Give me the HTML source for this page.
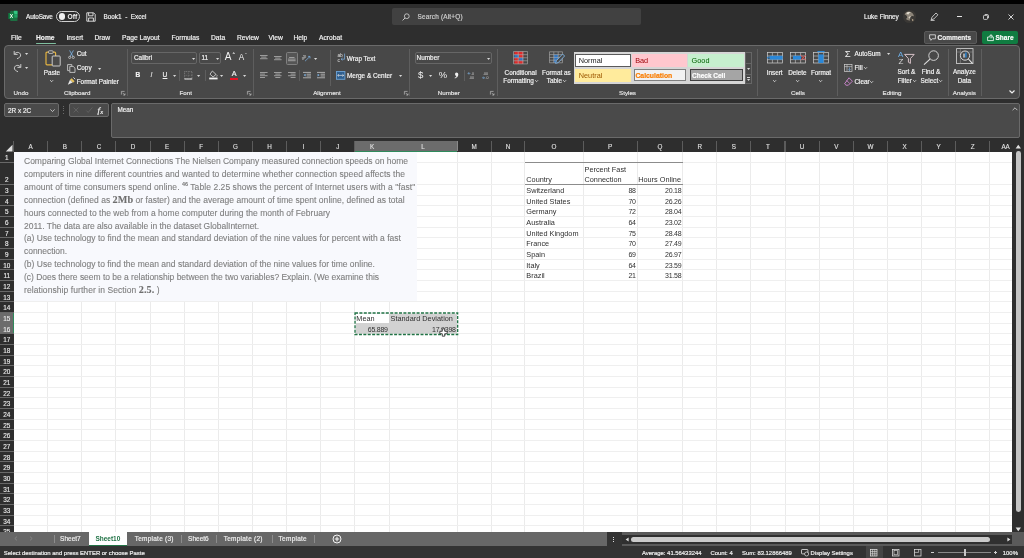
<!DOCTYPE html>
<html lang="en"><head><meta charset="utf-8"><title>Book1 - Excel</title><style>
html,body{margin:0;padding:0}
body{width:1024px;height:558px;overflow:hidden;position:relative;background:#2e2e2e;font-family:"Liberation Sans",sans-serif;-webkit-font-smoothing:antialiased}
#app{position:absolute;left:0;top:0;width:1024px;height:558px;will-change:transform;overflow:hidden}
.a{position:absolute;box-sizing:border-box}
.t{white-space:nowrap}
.w{-webkit-text-stroke:0.18px currentColor}
.p{font-size:8.5px;line-height:12px;color:#7e7e7e;-webkit-text-stroke:0.1px #7e7e7e}
.p sup{font-size:5.4px;line-height:0;font-weight:bold;vertical-align:4.2px;letter-spacing:0}
.m{font-family:"Liberation Serif",serif;font-size:10.2px;color:#6e6e6e;font-weight:bold}
.c{letter-spacing:0.02px}
.n{letter-spacing:-0.24px}
svg{overflow:visible}
</style></head><body><div id="app">
<div class="a" style="left:13.60px;top:152.00px;width:998.80px;height:379.60px;background:#fff;"></div><div class="a" style="left:47.23px;top:152.00px;width:0.90px;height:379.60px;background:#ebebeb;"></div><div class="a" style="left:81.36px;top:152.00px;width:0.90px;height:379.60px;background:#ebebeb;"></div><div class="a" style="left:115.49px;top:152.00px;width:0.90px;height:379.60px;background:#ebebeb;"></div><div class="a" style="left:149.62px;top:152.00px;width:0.90px;height:379.60px;background:#ebebeb;"></div><div class="a" style="left:183.75px;top:152.00px;width:0.90px;height:379.60px;background:#ebebeb;"></div><div class="a" style="left:217.88px;top:152.00px;width:0.90px;height:379.60px;background:#ebebeb;"></div><div class="a" style="left:252.01px;top:152.00px;width:0.90px;height:379.60px;background:#ebebeb;"></div><div class="a" style="left:286.14px;top:152.00px;width:0.90px;height:379.60px;background:#ebebeb;"></div><div class="a" style="left:320.27px;top:152.00px;width:0.90px;height:379.60px;background:#ebebeb;"></div><div class="a" style="left:354.40px;top:152.00px;width:0.90px;height:379.60px;background:#ebebeb;"></div><div class="a" style="left:388.60px;top:152.00px;width:0.90px;height:379.60px;background:#ebebeb;"></div><div class="a" style="left:456.60px;top:152.00px;width:0.90px;height:379.60px;background:#ebebeb;"></div><div class="a" style="left:490.80px;top:152.00px;width:0.90px;height:379.60px;background:#ebebeb;"></div><div class="a" style="left:524.40px;top:152.00px;width:0.90px;height:379.60px;background:#ebebeb;"></div><div class="a" style="left:582.60px;top:152.00px;width:0.90px;height:379.60px;background:#ebebeb;"></div><div class="a" style="left:636.60px;top:152.00px;width:0.90px;height:379.60px;background:#ebebeb;"></div><div class="a" style="left:682.20px;top:152.00px;width:0.90px;height:379.60px;background:#ebebeb;"></div><div class="a" style="left:716.33px;top:152.00px;width:0.90px;height:379.60px;background:#ebebeb;"></div><div class="a" style="left:750.46px;top:152.00px;width:0.90px;height:379.60px;background:#ebebeb;"></div><div class="a" style="left:784.59px;top:152.00px;width:0.90px;height:379.60px;background:#ebebeb;"></div><div class="a" style="left:818.72px;top:152.00px;width:0.90px;height:379.60px;background:#ebebeb;"></div><div class="a" style="left:852.85px;top:152.00px;width:0.90px;height:379.60px;background:#ebebeb;"></div><div class="a" style="left:886.98px;top:152.00px;width:0.90px;height:379.60px;background:#ebebeb;"></div><div class="a" style="left:921.11px;top:152.00px;width:0.90px;height:379.60px;background:#ebebeb;"></div><div class="a" style="left:955.24px;top:152.00px;width:0.90px;height:379.60px;background:#ebebeb;"></div><div class="a" style="left:989.37px;top:152.00px;width:0.90px;height:379.60px;background:#ebebeb;"></div><div class="a" style="left:13.60px;top:162.17px;width:998.80px;height:0.90px;background:#efefef;"></div><div class="a" style="left:13.60px;top:184.04px;width:998.80px;height:0.90px;background:#efefef;"></div><div class="a" style="left:13.60px;top:194.70px;width:998.80px;height:0.90px;background:#efefef;"></div><div class="a" style="left:13.60px;top:205.37px;width:998.80px;height:0.90px;background:#efefef;"></div><div class="a" style="left:13.60px;top:216.04px;width:998.80px;height:0.90px;background:#efefef;"></div><div class="a" style="left:13.60px;top:226.70px;width:998.80px;height:0.90px;background:#efefef;"></div><div class="a" style="left:13.60px;top:237.37px;width:998.80px;height:0.90px;background:#efefef;"></div><div class="a" style="left:13.60px;top:248.04px;width:998.80px;height:0.90px;background:#efefef;"></div><div class="a" style="left:13.60px;top:258.70px;width:998.80px;height:0.90px;background:#efefef;"></div><div class="a" style="left:13.60px;top:269.37px;width:998.80px;height:0.90px;background:#efefef;"></div><div class="a" style="left:13.60px;top:280.04px;width:998.80px;height:0.90px;background:#efefef;"></div><div class="a" style="left:13.60px;top:290.70px;width:998.80px;height:0.90px;background:#efefef;"></div><div class="a" style="left:13.60px;top:301.37px;width:998.80px;height:0.90px;background:#efefef;"></div><div class="a" style="left:13.60px;top:312.04px;width:998.80px;height:0.90px;background:#efefef;"></div><div class="a" style="left:13.60px;top:322.70px;width:998.80px;height:0.90px;background:#efefef;"></div><div class="a" style="left:13.60px;top:333.37px;width:998.80px;height:0.90px;background:#efefef;"></div><div class="a" style="left:13.60px;top:344.04px;width:998.80px;height:0.90px;background:#efefef;"></div><div class="a" style="left:13.60px;top:354.70px;width:998.80px;height:0.90px;background:#efefef;"></div><div class="a" style="left:13.60px;top:365.37px;width:998.80px;height:0.90px;background:#efefef;"></div><div class="a" style="left:13.60px;top:376.04px;width:998.80px;height:0.90px;background:#efefef;"></div><div class="a" style="left:13.60px;top:386.70px;width:998.80px;height:0.90px;background:#efefef;"></div><div class="a" style="left:13.60px;top:397.37px;width:998.80px;height:0.90px;background:#efefef;"></div><div class="a" style="left:13.60px;top:408.04px;width:998.80px;height:0.90px;background:#efefef;"></div><div class="a" style="left:13.60px;top:418.70px;width:998.80px;height:0.90px;background:#efefef;"></div><div class="a" style="left:13.60px;top:429.37px;width:998.80px;height:0.90px;background:#efefef;"></div><div class="a" style="left:13.60px;top:440.04px;width:998.80px;height:0.90px;background:#efefef;"></div><div class="a" style="left:13.60px;top:450.70px;width:998.80px;height:0.90px;background:#efefef;"></div><div class="a" style="left:13.60px;top:461.37px;width:998.80px;height:0.90px;background:#efefef;"></div><div class="a" style="left:13.60px;top:472.04px;width:998.80px;height:0.90px;background:#efefef;"></div><div class="a" style="left:13.60px;top:482.70px;width:998.80px;height:0.90px;background:#efefef;"></div><div class="a" style="left:13.60px;top:493.37px;width:998.80px;height:0.90px;background:#efefef;"></div><div class="a" style="left:13.60px;top:504.04px;width:998.80px;height:0.90px;background:#efefef;"></div><div class="a" style="left:13.60px;top:514.70px;width:998.80px;height:0.90px;background:#efefef;"></div><div class="a" style="left:13.60px;top:525.37px;width:998.80px;height:0.90px;background:#efefef;"></div><div class="a t " style="left:30.67px;top:141.80px;line-height:10px;font-size:6.3px;color:#e4e4e4;transform:translateX(-50%);-webkit-text-stroke:0.1px currentColor;">A</div><div class="a" style="left:47.13px;top:139.80px;width:1.10px;height:12.20px;background:#5c5c5c;"></div><div class="a t " style="left:64.80px;top:141.80px;line-height:10px;font-size:6.3px;color:#e4e4e4;transform:translateX(-50%);-webkit-text-stroke:0.1px currentColor;">B</div><div class="a" style="left:81.26px;top:139.80px;width:1.10px;height:12.20px;background:#5c5c5c;"></div><div class="a t " style="left:98.93px;top:141.80px;line-height:10px;font-size:6.3px;color:#e4e4e4;transform:translateX(-50%);-webkit-text-stroke:0.1px currentColor;">C</div><div class="a" style="left:115.39px;top:139.80px;width:1.10px;height:12.20px;background:#5c5c5c;"></div><div class="a t " style="left:133.06px;top:141.80px;line-height:10px;font-size:6.3px;color:#e4e4e4;transform:translateX(-50%);-webkit-text-stroke:0.1px currentColor;">D</div><div class="a" style="left:149.52px;top:139.80px;width:1.10px;height:12.20px;background:#5c5c5c;"></div><div class="a t " style="left:167.19px;top:141.80px;line-height:10px;font-size:6.3px;color:#e4e4e4;transform:translateX(-50%);-webkit-text-stroke:0.1px currentColor;">E</div><div class="a" style="left:183.65px;top:139.80px;width:1.10px;height:12.20px;background:#5c5c5c;"></div><div class="a t " style="left:201.31px;top:141.80px;line-height:10px;font-size:6.3px;color:#e4e4e4;transform:translateX(-50%);-webkit-text-stroke:0.1px currentColor;">F</div><div class="a" style="left:217.78px;top:139.80px;width:1.10px;height:12.20px;background:#5c5c5c;"></div><div class="a t " style="left:235.44px;top:141.80px;line-height:10px;font-size:6.3px;color:#e4e4e4;transform:translateX(-50%);-webkit-text-stroke:0.1px currentColor;">G</div><div class="a" style="left:251.91px;top:139.80px;width:1.10px;height:12.20px;background:#5c5c5c;"></div><div class="a t " style="left:269.57px;top:141.80px;line-height:10px;font-size:6.3px;color:#e4e4e4;transform:translateX(-50%);-webkit-text-stroke:0.1px currentColor;">H</div><div class="a" style="left:286.04px;top:139.80px;width:1.10px;height:12.20px;background:#5c5c5c;"></div><div class="a t " style="left:303.70px;top:141.80px;line-height:10px;font-size:6.3px;color:#e4e4e4;transform:translateX(-50%);-webkit-text-stroke:0.1px currentColor;">I</div><div class="a" style="left:320.17px;top:139.80px;width:1.10px;height:12.20px;background:#5c5c5c;"></div><div class="a t " style="left:337.83px;top:141.80px;line-height:10px;font-size:6.3px;color:#e4e4e4;transform:translateX(-50%);-webkit-text-stroke:0.1px currentColor;">J</div><div class="a" style="left:354.30px;top:139.80px;width:1.10px;height:12.20px;background:#5c5c5c;"></div><div class="a" style="left:354.90px;top:141.20px;width:34.20px;height:10.80px;background:#6c6c6c;border-bottom:1px solid #2f8a5c;box-sizing:border-box;"></div><div class="a t " style="left:372.00px;top:141.80px;line-height:10px;font-size:6.3px;color:#e4e4e4;transform:translateX(-50%);-webkit-text-stroke:0.1px currentColor;">K</div><div class="a" style="left:388.50px;top:141.20px;width:1.10px;height:9.80px;background:#8a8a8a;"></div><div class="a" style="left:389.10px;top:141.20px;width:68.00px;height:10.80px;background:#6c6c6c;border-bottom:1px solid #2f8a5c;box-sizing:border-box;"></div><div class="a t " style="left:423.10px;top:141.80px;line-height:10px;font-size:6.3px;color:#e4e4e4;transform:translateX(-50%);-webkit-text-stroke:0.1px currentColor;">L</div><div class="a" style="left:456.50px;top:141.20px;width:1.10px;height:9.80px;background:#8a8a8a;"></div><div class="a t " style="left:474.20px;top:141.80px;line-height:10px;font-size:6.3px;color:#e4e4e4;transform:translateX(-50%);-webkit-text-stroke:0.1px currentColor;">M</div><div class="a" style="left:490.70px;top:139.80px;width:1.10px;height:12.20px;background:#5c5c5c;"></div><div class="a t " style="left:508.10px;top:141.80px;line-height:10px;font-size:6.3px;color:#e4e4e4;transform:translateX(-50%);-webkit-text-stroke:0.1px currentColor;">N</div><div class="a" style="left:524.30px;top:139.80px;width:1.10px;height:12.20px;background:#5c5c5c;"></div><div class="a t " style="left:554.00px;top:141.80px;line-height:10px;font-size:6.3px;color:#e4e4e4;transform:translateX(-50%);-webkit-text-stroke:0.1px currentColor;">O</div><div class="a" style="left:582.50px;top:139.80px;width:1.10px;height:12.20px;background:#5c5c5c;"></div><div class="a t " style="left:610.10px;top:141.80px;line-height:10px;font-size:6.3px;color:#e4e4e4;transform:translateX(-50%);-webkit-text-stroke:0.1px currentColor;">P</div><div class="a" style="left:636.50px;top:139.80px;width:1.10px;height:12.20px;background:#5c5c5c;"></div><div class="a t " style="left:659.90px;top:141.80px;line-height:10px;font-size:6.3px;color:#e4e4e4;transform:translateX(-50%);-webkit-text-stroke:0.1px currentColor;">Q</div><div class="a" style="left:682.10px;top:139.80px;width:1.10px;height:12.20px;background:#5c5c5c;"></div><div class="a t " style="left:699.77px;top:141.80px;line-height:10px;font-size:6.3px;color:#e4e4e4;transform:translateX(-50%);-webkit-text-stroke:0.1px currentColor;">R</div><div class="a" style="left:716.23px;top:139.80px;width:1.10px;height:12.20px;background:#5c5c5c;"></div><div class="a t " style="left:733.89px;top:141.80px;line-height:10px;font-size:6.3px;color:#e4e4e4;transform:translateX(-50%);-webkit-text-stroke:0.1px currentColor;">S</div><div class="a" style="left:750.36px;top:139.80px;width:1.10px;height:12.20px;background:#5c5c5c;"></div><div class="a t " style="left:768.03px;top:141.80px;line-height:10px;font-size:6.3px;color:#e4e4e4;transform:translateX(-50%);-webkit-text-stroke:0.1px currentColor;">T</div><div class="a" style="left:784.49px;top:139.80px;width:1.10px;height:12.20px;background:#5c5c5c;"></div><div class="a t " style="left:802.15px;top:141.80px;line-height:10px;font-size:6.3px;color:#e4e4e4;transform:translateX(-50%);-webkit-text-stroke:0.1px currentColor;">U</div><div class="a" style="left:818.62px;top:139.80px;width:1.10px;height:12.20px;background:#5c5c5c;"></div><div class="a t " style="left:836.29px;top:141.80px;line-height:10px;font-size:6.3px;color:#e4e4e4;transform:translateX(-50%);-webkit-text-stroke:0.1px currentColor;">V</div><div class="a" style="left:852.75px;top:139.80px;width:1.10px;height:12.20px;background:#5c5c5c;"></div><div class="a t " style="left:870.41px;top:141.80px;line-height:10px;font-size:6.3px;color:#e4e4e4;transform:translateX(-50%);-webkit-text-stroke:0.1px currentColor;">W</div><div class="a" style="left:886.88px;top:139.80px;width:1.10px;height:12.20px;background:#5c5c5c;"></div><div class="a t " style="left:904.55px;top:141.80px;line-height:10px;font-size:6.3px;color:#e4e4e4;transform:translateX(-50%);-webkit-text-stroke:0.1px currentColor;">X</div><div class="a" style="left:921.01px;top:139.80px;width:1.10px;height:12.20px;background:#5c5c5c;"></div><div class="a t " style="left:938.67px;top:141.80px;line-height:10px;font-size:6.3px;color:#e4e4e4;transform:translateX(-50%);-webkit-text-stroke:0.1px currentColor;">Y</div><div class="a" style="left:955.14px;top:139.80px;width:1.10px;height:12.20px;background:#5c5c5c;"></div><div class="a t " style="left:972.81px;top:141.80px;line-height:10px;font-size:6.3px;color:#e4e4e4;transform:translateX(-50%);-webkit-text-stroke:0.1px currentColor;">Z</div><div class="a" style="left:989.27px;top:139.80px;width:1.10px;height:12.20px;background:#5c5c5c;"></div><div class="a t " style="left:1005.60px;top:141.80px;line-height:10px;font-size:6.3px;color:#e4e4e4;transform:translateX(-50%);-webkit-text-stroke:0.1px currentColor;">AA</div><div class="a" style="left:13.00px;top:139.80px;width:1.10px;height:12.20px;background:#5c5c5c;"></div><svg class="a" style="left:4.50px;top:143.50px;" width="8" height="8" viewBox="0 0 8 8"><path d="M7.5 0.8 L7.5 7.5 L0.8 7.5 Z" fill="#e0e0e0"/></svg><div class="a t w" style="left:0;width:13.6px;text-align:center;top:153.43px;line-height:10px;font-size:6.4px;color:#ececec;-webkit-text-stroke-width:0.12px;clip-path:inset(0 0 0.00px 0)">1</div><div class="a" style="left:0.00px;top:161.97px;width:13.60px;height:1.20px;background:#686868;"></div><div class="a t w" style="left:0;width:13.6px;text-align:center;top:175.44px;line-height:10px;font-size:6.4px;color:#ececec;-webkit-text-stroke-width:0.12px;clip-path:inset(0 0 0.00px 0)">2</div><div class="a" style="left:0.00px;top:183.84px;width:13.60px;height:1.20px;background:#686868;"></div><div class="a t w" style="left:0;width:13.6px;text-align:center;top:185.97px;line-height:10px;font-size:6.4px;color:#ececec;-webkit-text-stroke-width:0.12px;clip-path:inset(0 0 0.00px 0)">3</div><div class="a" style="left:0.00px;top:194.50px;width:13.60px;height:1.20px;background:#686868;"></div><div class="a t w" style="left:0;width:13.6px;text-align:center;top:196.64px;line-height:10px;font-size:6.4px;color:#ececec;-webkit-text-stroke-width:0.12px;clip-path:inset(0 0 0.00px 0)">4</div><div class="a" style="left:0.00px;top:205.17px;width:13.60px;height:1.20px;background:#686868;"></div><div class="a t w" style="left:0;width:13.6px;text-align:center;top:207.30px;line-height:10px;font-size:6.4px;color:#ececec;-webkit-text-stroke-width:0.12px;clip-path:inset(0 0 0.00px 0)">5</div><div class="a" style="left:0.00px;top:215.84px;width:13.60px;height:1.20px;background:#686868;"></div><div class="a t w" style="left:0;width:13.6px;text-align:center;top:217.97px;line-height:10px;font-size:6.4px;color:#ececec;-webkit-text-stroke-width:0.12px;clip-path:inset(0 0 0.00px 0)">6</div><div class="a" style="left:0.00px;top:226.50px;width:13.60px;height:1.20px;background:#686868;"></div><div class="a t w" style="left:0;width:13.6px;text-align:center;top:228.64px;line-height:10px;font-size:6.4px;color:#ececec;-webkit-text-stroke-width:0.12px;clip-path:inset(0 0 0.00px 0)">7</div><div class="a" style="left:0.00px;top:237.17px;width:13.60px;height:1.20px;background:#686868;"></div><div class="a t w" style="left:0;width:13.6px;text-align:center;top:239.30px;line-height:10px;font-size:6.4px;color:#ececec;-webkit-text-stroke-width:0.12px;clip-path:inset(0 0 0.00px 0)">8</div><div class="a" style="left:0.00px;top:247.84px;width:13.60px;height:1.20px;background:#686868;"></div><div class="a t w" style="left:0;width:13.6px;text-align:center;top:249.97px;line-height:10px;font-size:6.4px;color:#ececec;-webkit-text-stroke-width:0.12px;clip-path:inset(0 0 0.00px 0)">9</div><div class="a" style="left:0.00px;top:258.50px;width:13.60px;height:1.20px;background:#686868;"></div><div class="a t w" style="left:0;width:13.6px;text-align:center;top:260.64px;line-height:10px;font-size:6.4px;color:#ececec;-webkit-text-stroke-width:0.12px;clip-path:inset(0 0 0.00px 0)">10</div><div class="a" style="left:0.00px;top:269.17px;width:13.60px;height:1.20px;background:#686868;"></div><div class="a t w" style="left:0;width:13.6px;text-align:center;top:271.30px;line-height:10px;font-size:6.4px;color:#ececec;-webkit-text-stroke-width:0.12px;clip-path:inset(0 0 0.00px 0)">11</div><div class="a" style="left:0.00px;top:279.84px;width:13.60px;height:1.20px;background:#686868;"></div><div class="a t w" style="left:0;width:13.6px;text-align:center;top:281.97px;line-height:10px;font-size:6.4px;color:#ececec;-webkit-text-stroke-width:0.12px;clip-path:inset(0 0 0.00px 0)">12</div><div class="a" style="left:0.00px;top:290.50px;width:13.60px;height:1.20px;background:#686868;"></div><div class="a t w" style="left:0;width:13.6px;text-align:center;top:292.64px;line-height:10px;font-size:6.4px;color:#ececec;-webkit-text-stroke-width:0.12px;clip-path:inset(0 0 0.00px 0)">13</div><div class="a" style="left:0.00px;top:301.17px;width:13.60px;height:1.20px;background:#686868;"></div><div class="a t w" style="left:0;width:13.6px;text-align:center;top:303.30px;line-height:10px;font-size:6.4px;color:#ececec;-webkit-text-stroke-width:0.12px;clip-path:inset(0 0 0.00px 0)">14</div><div class="a" style="left:0.00px;top:311.84px;width:13.60px;height:1.20px;background:#686868;"></div><div class="a" style="left:0.00px;top:312.54px;width:13.90px;height:10.67px;background:#6c6c6c;border-right:1.4px solid #2f8a5c;box-sizing:border-box;"></div><div class="a t w" style="left:0;width:13.6px;text-align:center;top:313.97px;line-height:10px;font-size:6.4px;color:#ececec;-webkit-text-stroke-width:0.12px;clip-path:inset(0 0 0.00px 0)">15</div><div class="a" style="left:0.00px;top:322.50px;width:13.60px;height:1.20px;background:#8a8a8a;"></div><div class="a" style="left:0.00px;top:323.20px;width:13.90px;height:10.67px;background:#6c6c6c;border-right:1.4px solid #2f8a5c;box-sizing:border-box;"></div><div class="a t w" style="left:0;width:13.6px;text-align:center;top:324.64px;line-height:10px;font-size:6.4px;color:#ececec;-webkit-text-stroke-width:0.12px;clip-path:inset(0 0 0.00px 0)">16</div><div class="a" style="left:0.00px;top:333.17px;width:13.60px;height:1.20px;background:#686868;"></div><div class="a t w" style="left:0;width:13.6px;text-align:center;top:335.30px;line-height:10px;font-size:6.4px;color:#ececec;-webkit-text-stroke-width:0.12px;clip-path:inset(0 0 0.00px 0)">17</div><div class="a" style="left:0.00px;top:343.84px;width:13.60px;height:1.20px;background:#686868;"></div><div class="a t w" style="left:0;width:13.6px;text-align:center;top:345.97px;line-height:10px;font-size:6.4px;color:#ececec;-webkit-text-stroke-width:0.12px;clip-path:inset(0 0 0.00px 0)">18</div><div class="a" style="left:0.00px;top:354.50px;width:13.60px;height:1.20px;background:#686868;"></div><div class="a t w" style="left:0;width:13.6px;text-align:center;top:356.64px;line-height:10px;font-size:6.4px;color:#ececec;-webkit-text-stroke-width:0.12px;clip-path:inset(0 0 0.00px 0)">19</div><div class="a" style="left:0.00px;top:365.17px;width:13.60px;height:1.20px;background:#686868;"></div><div class="a t w" style="left:0;width:13.6px;text-align:center;top:367.30px;line-height:10px;font-size:6.4px;color:#ececec;-webkit-text-stroke-width:0.12px;clip-path:inset(0 0 0.00px 0)">20</div><div class="a" style="left:0.00px;top:375.84px;width:13.60px;height:1.20px;background:#686868;"></div><div class="a t w" style="left:0;width:13.6px;text-align:center;top:377.97px;line-height:10px;font-size:6.4px;color:#ececec;-webkit-text-stroke-width:0.12px;clip-path:inset(0 0 0.00px 0)">21</div><div class="a" style="left:0.00px;top:386.50px;width:13.60px;height:1.20px;background:#686868;"></div><div class="a t w" style="left:0;width:13.6px;text-align:center;top:388.64px;line-height:10px;font-size:6.4px;color:#ececec;-webkit-text-stroke-width:0.12px;clip-path:inset(0 0 0.00px 0)">22</div><div class="a" style="left:0.00px;top:397.17px;width:13.60px;height:1.20px;background:#686868;"></div><div class="a t w" style="left:0;width:13.6px;text-align:center;top:399.30px;line-height:10px;font-size:6.4px;color:#ececec;-webkit-text-stroke-width:0.12px;clip-path:inset(0 0 0.00px 0)">23</div><div class="a" style="left:0.00px;top:407.84px;width:13.60px;height:1.20px;background:#686868;"></div><div class="a t w" style="left:0;width:13.6px;text-align:center;top:409.97px;line-height:10px;font-size:6.4px;color:#ececec;-webkit-text-stroke-width:0.12px;clip-path:inset(0 0 0.00px 0)">24</div><div class="a" style="left:0.00px;top:418.50px;width:13.60px;height:1.20px;background:#686868;"></div><div class="a t w" style="left:0;width:13.6px;text-align:center;top:420.64px;line-height:10px;font-size:6.4px;color:#ececec;-webkit-text-stroke-width:0.12px;clip-path:inset(0 0 0.00px 0)">25</div><div class="a" style="left:0.00px;top:429.17px;width:13.60px;height:1.20px;background:#686868;"></div><div class="a t w" style="left:0;width:13.6px;text-align:center;top:431.30px;line-height:10px;font-size:6.4px;color:#ececec;-webkit-text-stroke-width:0.12px;clip-path:inset(0 0 0.00px 0)">26</div><div class="a" style="left:0.00px;top:439.84px;width:13.60px;height:1.20px;background:#686868;"></div><div class="a t w" style="left:0;width:13.6px;text-align:center;top:441.97px;line-height:10px;font-size:6.4px;color:#ececec;-webkit-text-stroke-width:0.12px;clip-path:inset(0 0 0.00px 0)">27</div><div class="a" style="left:0.00px;top:450.50px;width:13.60px;height:1.20px;background:#686868;"></div><div class="a t w" style="left:0;width:13.6px;text-align:center;top:452.64px;line-height:10px;font-size:6.4px;color:#ececec;-webkit-text-stroke-width:0.12px;clip-path:inset(0 0 0.00px 0)">28</div><div class="a" style="left:0.00px;top:461.17px;width:13.60px;height:1.20px;background:#686868;"></div><div class="a t w" style="left:0;width:13.6px;text-align:center;top:463.30px;line-height:10px;font-size:6.4px;color:#ececec;-webkit-text-stroke-width:0.12px;clip-path:inset(0 0 0.00px 0)">29</div><div class="a" style="left:0.00px;top:471.84px;width:13.60px;height:1.20px;background:#686868;"></div><div class="a t w" style="left:0;width:13.6px;text-align:center;top:473.97px;line-height:10px;font-size:6.4px;color:#ececec;-webkit-text-stroke-width:0.12px;clip-path:inset(0 0 0.00px 0)">30</div><div class="a" style="left:0.00px;top:482.50px;width:13.60px;height:1.20px;background:#686868;"></div><div class="a t w" style="left:0;width:13.6px;text-align:center;top:484.64px;line-height:10px;font-size:6.4px;color:#ececec;-webkit-text-stroke-width:0.12px;clip-path:inset(0 0 0.00px 0)">31</div><div class="a" style="left:0.00px;top:493.17px;width:13.60px;height:1.20px;background:#686868;"></div><div class="a t w" style="left:0;width:13.6px;text-align:center;top:495.30px;line-height:10px;font-size:6.4px;color:#ececec;-webkit-text-stroke-width:0.12px;clip-path:inset(0 0 0.00px 0)">32</div><div class="a" style="left:0.00px;top:503.84px;width:13.60px;height:1.20px;background:#686868;"></div><div class="a t w" style="left:0;width:13.6px;text-align:center;top:505.97px;line-height:10px;font-size:6.4px;color:#ececec;-webkit-text-stroke-width:0.12px;clip-path:inset(0 0 0.00px 0)">33</div><div class="a" style="left:0.00px;top:514.50px;width:13.60px;height:1.20px;background:#686868;"></div><div class="a t w" style="left:0;width:13.6px;text-align:center;top:516.64px;line-height:10px;font-size:6.4px;color:#ececec;-webkit-text-stroke-width:0.12px;clip-path:inset(0 0 0.00px 0)">34</div><div class="a" style="left:0.00px;top:525.17px;width:13.60px;height:1.20px;background:#686868;"></div><div class="a t w" style="left:0;width:13.6px;text-align:center;top:527.30px;line-height:10px;font-size:6.4px;color:#ececec;-webkit-text-stroke-width:0.12px;clip-path:inset(0 0 4.90px 0)">35</div><div class="a" style="left:13.60px;top:152.00px;width:403.60px;height:148.60px;background:#f8f9fd;"></div><div class="a t p" style="left:24px;top:155.20px;letter-spacing:-0.005px">Comparing Global Internet Connections The Nielsen Company measured connection speeds on home</div><div class="a t p" style="left:24px;top:168.07px;letter-spacing:0.053px">computers in nine different countries and wanted to determine whether connection speed affects the</div><div class="a t p" style="left:24px;top:180.94px;letter-spacing:0.066px">amount of time consumers spend online. <sup>46</sup> Table 2.25 shows the percent of Internet users with a "fast"</div><div class="a t p" style="left:24px;top:193.81px;letter-spacing:0.031px">connection (defined as <span class="m">2Mb</span> or faster) and the average amount of time spent online, defined as total</div><div class="a t p" style="left:24px;top:206.68px;letter-spacing:0.023px">hours connected to the web from a home computer during the month of February</div><div class="a t p" style="left:24px;top:219.55px;letter-spacing:-0.022px">2011. The data are also available in the dataset GlobalInternet.</div><div class="a t p" style="left:24px;top:232.42px;letter-spacing:0.013px">(a) Use technology to find the mean and standard deviation of the nine values for percent with a fast</div><div class="a t p" style="left:24px;top:245.29px;letter-spacing:-0.044px">connection.</div><div class="a t p" style="left:24px;top:258.16px;letter-spacing:0.009px">(b) Use technology to find the mean and standard deviation of the nine values for time online.</div><div class="a t p" style="left:24px;top:271.03px;letter-spacing:-0.022px">(c) Does there seem to be a relationship between the two variables? Explain. (We examine this</div><div class="a t p" style="left:24px;top:283.90px;letter-spacing:0.072px">relationship further in Section <span class="m">2.5.</span> )</div><div class="a" style="left:524.90px;top:161.87px;width:157.80px;height:1.10px;background:#8c8c8c;"></div><div class="a" style="left:524.90px;top:183.74px;width:157.80px;height:1.10px;background:#8c8c8c;"></div><div class="a t c" style="left:526.30px;top:175.44px;line-height:10px;font-size:7.3px;color:#303030;">Country</div><div class="a t c" style="left:584.50px;top:164.64px;line-height:10px;font-size:7.3px;color:#303030;">Percent Fast</div><div class="a t c" style="left:584.50px;top:175.44px;line-height:10px;font-size:7.3px;color:#303030;">Connection</div><div class="a t c" style="left:681.00px;top:175.44px;line-height:10px;font-size:7.3px;color:#303030;transform:translateX(-100%);">Hours Online</div><div class="a t c" style="left:526.30px;top:186.10px;line-height:10px;font-size:7.3px;color:#303030;">Switzerland</div><div class="a t n" style="left:635.74px;top:186.10px;line-height:10px;font-size:7.0px;color:#303030;transform:translateX(-100%);">88</div><div class="a t n" style="left:681.34px;top:186.10px;line-height:10px;font-size:7.0px;color:#303030;transform:translateX(-100%);">20.18</div><div class="a t c" style="left:526.30px;top:196.77px;line-height:10px;font-size:7.3px;color:#303030;">United States</div><div class="a t n" style="left:635.74px;top:196.77px;line-height:10px;font-size:7.0px;color:#303030;transform:translateX(-100%);">70</div><div class="a t n" style="left:681.34px;top:196.77px;line-height:10px;font-size:7.0px;color:#303030;transform:translateX(-100%);">26.26</div><div class="a t c" style="left:526.30px;top:207.44px;line-height:10px;font-size:7.3px;color:#303030;">Germany</div><div class="a t n" style="left:635.74px;top:207.44px;line-height:10px;font-size:7.0px;color:#303030;transform:translateX(-100%);">72</div><div class="a t n" style="left:681.34px;top:207.44px;line-height:10px;font-size:7.0px;color:#303030;transform:translateX(-100%);">28.04</div><div class="a t c" style="left:526.30px;top:218.10px;line-height:10px;font-size:7.3px;color:#303030;">Australia</div><div class="a t n" style="left:635.74px;top:218.10px;line-height:10px;font-size:7.0px;color:#303030;transform:translateX(-100%);">64</div><div class="a t n" style="left:681.34px;top:218.10px;line-height:10px;font-size:7.0px;color:#303030;transform:translateX(-100%);">23.02</div><div class="a t c" style="left:526.30px;top:228.77px;line-height:10px;font-size:7.3px;color:#303030;">United Kingdom</div><div class="a t n" style="left:635.74px;top:228.77px;line-height:10px;font-size:7.0px;color:#303030;transform:translateX(-100%);">75</div><div class="a t n" style="left:681.34px;top:228.77px;line-height:10px;font-size:7.0px;color:#303030;transform:translateX(-100%);">28.48</div><div class="a t c" style="left:526.30px;top:239.44px;line-height:10px;font-size:7.3px;color:#303030;">France</div><div class="a t n" style="left:635.74px;top:239.44px;line-height:10px;font-size:7.0px;color:#303030;transform:translateX(-100%);">70</div><div class="a t n" style="left:681.34px;top:239.44px;line-height:10px;font-size:7.0px;color:#303030;transform:translateX(-100%);">27.49</div><div class="a t c" style="left:526.30px;top:250.10px;line-height:10px;font-size:7.3px;color:#303030;">Spain</div><div class="a t n" style="left:635.74px;top:250.10px;line-height:10px;font-size:7.0px;color:#303030;transform:translateX(-100%);">69</div><div class="a t n" style="left:681.34px;top:250.10px;line-height:10px;font-size:7.0px;color:#303030;transform:translateX(-100%);">26.97</div><div class="a t c" style="left:526.30px;top:260.77px;line-height:10px;font-size:7.3px;color:#303030;">Italy</div><div class="a t n" style="left:635.74px;top:260.77px;line-height:10px;font-size:7.0px;color:#303030;transform:translateX(-100%);">64</div><div class="a t n" style="left:681.34px;top:260.77px;line-height:10px;font-size:7.0px;color:#303030;transform:translateX(-100%);">23.59</div><div class="a t c" style="left:526.30px;top:271.44px;line-height:10px;font-size:7.3px;color:#303030;">Brazil</div><div class="a t n" style="left:635.74px;top:271.44px;line-height:10px;font-size:7.0px;color:#303030;transform:translateX(-100%);">21</div><div class="a t n" style="left:681.34px;top:271.44px;line-height:10px;font-size:7.0px;color:#303030;transform:translateX(-100%);">31.58</div><div class="a" style="left:354.90px;top:312.54px;width:102.20px;height:21.33px;background:#d2d2d2;"></div><div class="a" style="left:355.90px;top:313.54px;width:33.00px;height:9.47px;background:#fff;"></div><div class="a t c" style="left:356.30px;top:314.10px;line-height:10px;font-size:7.3px;color:#303030;">Mean</div><div class="a t c" style="left:390.50px;top:314.10px;line-height:10px;font-size:7.3px;color:#303030;">Standard Deviation</div><div class="a t n" style="left:387.74px;top:324.77px;line-height:10px;font-size:7.0px;color:#303030;transform:translateX(-100%);">65.889</div><div class="a t n" style="left:455.74px;top:324.77px;line-height:10px;font-size:7.0px;color:#303030;transform:translateX(-100%);">17.9398</div><svg class="a" style="left:352.65px;top:310.84px;" width="106.7" height="25.53" viewBox="0 0 106.7 25.53"><rect x="2" y="2" width="102.70" height="21.53" fill="none" stroke="#fff" stroke-width="1.3"/><rect x="2" y="2" width="102.70" height="21.53" fill="none" stroke="#217346" stroke-width="1.3" stroke-dasharray="3 1.4"/></svg><svg class="a" style="left:438.60px;top:328.20px;" width="9" height="9" viewBox="0 0 11 11"><path d="M4 1h3v3h3v3h-3v3h-3v-3h-3v-3h3z" fill="#fff" stroke="#222" stroke-width="1"/></svg><div class="a" style="left:1012.40px;top:139.00px;width:11.60px;height:392.80px;background:#2e2e2e;"></div><div class="a" style="left:1016.20px;top:150.80px;width:4.80px;height:361.60px;background:#c4c4c4;border-radius:2.4px;"></div><svg class="a" style="left:1015.40px;top:143.60px;" width="7" height="5" viewBox="0 0 7 5"><path d="M0.6 4.4 L3.3 0.8 L6 4.4Z" fill="#e0e0e0"/></svg><svg class="a" style="left:1015.40px;top:526.60px;" width="7" height="5" viewBox="0 0 7 5"><path d="M0.6 0.6 L3.3 4.2 L6 0.6Z" fill="#e0e0e0"/></svg>
<div class="a" style="left:0.00px;top:0.00px;width:1024.00px;height:3.60px;background:#000;"></div><div class="a" style="left:0.00px;top:3.60px;width:1024.00px;height:96.40px;background:#2e2e2e;"></div><svg class="a" style="left:8.00px;top:9.50px;" width="10" height="12" viewBox="0 0 10 12"><rect x="2.2" y="0.8" width="7.3" height="10.2" rx="0.8" fill="#1d6f42"/><rect x="5.8" y="0.8" width="3.7" height="3.4" fill="#33c481"/><rect x="5.8" y="4.2" width="3.7" height="3.4" fill="#21a366"/><rect x="0.3" y="3" width="6" height="6" rx="0.6" fill="#107c41"/><text x="3.3" y="8" font-size="5" font-weight="bold" fill="#fff" text-anchor="middle" font-family="Liberation Sans, sans-serif">X</text></svg><div class="a t  w" style="left:26.00px;top:11.50px;line-height:10px;font-size:6.4px;color:#f2f2f2;letter-spacing:-0.12px;">AutoSave</div><div class="a" style="left:56.20px;top:11.20px;width:23.60px;height:10.60px;border:1px solid #d0d0d0;border-radius:6px;"></div><div class="a" style="left:58.60px;top:13.20px;width:6.60px;height:6.60px;background:#f0f0f0;border-radius:50%;"></div><div class="a t " style="left:67.60px;top:11.50px;line-height:10px;font-size:6.7px;color:#f2f2f2;font-weight:bold;-webkit-text-stroke:0;">Off</div><svg class="a" style="left:86.00px;top:12.00px;" width="10" height="10" viewBox="0 0 10 10"><path d="M0.8 0.8h6.8l1.6 1.6v6.8h-8.4z" fill="none" stroke="#e6e6e6" stroke-width="0.9"/><path d="M2.6 0.8v3h4.4v-3M2.6 9.2v-3.2h4.8v3.2" fill="none" stroke="#e6e6e6" stroke-width="0.9"/></svg><div class="a t  w" style="left:103.50px;top:11.60px;line-height:10px;font-size:6.4px;color:#f2f2f2;">Book1&nbsp; -&nbsp; Excel</div><div class="a" style="left:392.00px;top:8.00px;width:248.60px;height:17.00px;background:#414141;border-radius:2px;"></div><svg class="a" style="left:401.50px;top:12.50px;" width="8" height="8" viewBox="0 0 8 8"><circle cx="4.8" cy="3.2" r="2.4" fill="none" stroke="#d8d8d8" stroke-width="0.8"/><path d="M3 5 L0.6 7.4" stroke="#d8d8d8" stroke-width="0.9"/></svg><div class="a t  w" style="left:417.50px;top:11.60px;line-height:10px;font-size:6.4px;color:#cfcfcf;letter-spacing:0.2px;">Search (Alt+Q)</div><div class="a t  w" style="left:864.00px;top:11.60px;line-height:10px;font-size:6.4px;color:#f2f2f2;">Luke Finney</div><svg class="a" style="left:902.00px;top:9.00px;" width="15" height="15" viewBox="0 0 15 15"><circle cx="7.5" cy="7.5" r="6.6" fill="#3a3835"/><path d="M2.6 5.4c1-2.6 4.4-3.6 6.6-2.2c1.6 1 2.6 2.6 2.8 4.2c-1.4-0.6-2.6-0.4-3.6 0.6c-0.8 0.9-0.8 2.2-0.2 3.4c-1.6 0.4-3.2-0.2-4.4-1.6c1.2-0.4 1.6-1.4 1.2-2.4c-0.4-1-1.4-1.6-2.4-2z" fill="#8c8478"/><path d="M4.2 4.2c1.2-1.4 3.4-1.6 4.8-0.6c-1.4 0.2-2.4 1-2.8 2.2c-0.6-0.8-1.2-1.2-2-1.6z" fill="#e6e0d4"/><path d="M6.4 8.2c0.6-0.8 1.6-1.2 2.6-1c-0.8 0.8-1 1.8-0.8 2.8c-0.8-0.4-1.4-1-1.8-1.8z" fill="#d8d0c2"/><path d="M9.6 9.4l2.2 1.6-1.4 1.2z" fill="#b8a890"/></svg><svg class="a" style="left:929.50px;top:12.00px;" width="9" height="9" viewBox="0 0 9 9"><path d="M1.2 7.8l0.8-2.6 4-4.2 1.9 1.8-4.1 4.2z M0.6 8.4h4" fill="none" stroke="#e6e6e6" stroke-width="0.8"/></svg><div class="a" style="left:956.50px;top:16.30px;width:5.00px;height:0.80px;background:#e6e6e6;"></div><svg class="a" style="left:982.50px;top:13.50px;" width="6" height="6" viewBox="0 0 6 6"><rect x="0.5" y="1.4" width="4" height="4" rx="0.8" fill="none" stroke="#e6e6e6" stroke-width="0.8"/><path d="M1.8 0.5h2.4a1.3 1.3 0 0 1 1.3 1.3v2.4" fill="none" stroke="#e6e6e6" stroke-width="0.8"/></svg><svg class="a" style="left:1008.00px;top:13.50px;" width="6" height="6" viewBox="0 0 6 6"><path d="M0.5 0.5L5.5 5.5M5.5 0.5L0.5 5.5" stroke="#e6e6e6" stroke-width="0.9"/></svg><div class="a t  w" style="left:11.00px;top:33.10px;line-height:10px;font-size:6.7px;color:#f2f2f2;">File</div><div class="a t  w" style="left:36.00px;top:33.10px;line-height:10px;font-size:6.7px;color:#f2f2f2;font-weight:bold;">Home</div><div class="a t  w" style="left:66.50px;top:33.10px;line-height:10px;font-size:6.7px;color:#f2f2f2;">Insert</div><div class="a t  w" style="left:94.50px;top:33.10px;line-height:10px;font-size:6.7px;color:#f2f2f2;">Draw</div><div class="a t  w" style="left:122.00px;top:33.10px;line-height:10px;font-size:6.7px;color:#f2f2f2;">Page Layout</div><div class="a t  w" style="left:171.50px;top:33.10px;line-height:10px;font-size:6.7px;color:#f2f2f2;">Formulas</div><div class="a t  w" style="left:211.00px;top:33.10px;line-height:10px;font-size:6.7px;color:#f2f2f2;">Data</div><div class="a t  w" style="left:237.00px;top:33.10px;line-height:10px;font-size:6.7px;color:#f2f2f2;">Review</div><div class="a t  w" style="left:268.50px;top:33.10px;line-height:10px;font-size:6.7px;color:#f2f2f2;">View</div><div class="a t  w" style="left:293.50px;top:33.10px;line-height:10px;font-size:6.7px;color:#f2f2f2;">Help</div><div class="a t  w" style="left:319.00px;top:33.10px;line-height:10px;font-size:6.7px;color:#f2f2f2;">Acrobat</div><div class="a" style="left:36.00px;top:42.70px;width:20.00px;height:1.10px;background:#7fbf9f;border-radius:1px;"></div><div class="a" style="left:923.50px;top:31.40px;width:53.60px;height:12.60px;background:#484848;border:0.8px solid #5a5a5a;border-radius:2px;"></div><svg class="a" style="left:928.50px;top:34.00px;" width="7" height="7" viewBox="0 0 7 7"><path d="M0.6 0.8h5.8v4h-3l-1.6 1.5v-1.5h-1.2z" fill="none" stroke="#e6e6e6" stroke-width="0.8"/></svg><div class="a t  w" style="left:937.50px;top:32.60px;line-height:10px;font-size:6.5px;color:#f2f2f2;font-weight:bold;">Comments</div><div class="a" style="left:981.50px;top:31.40px;width:36.40px;height:12.60px;background:#107c41;border-radius:2px;"></div><svg class="a" style="left:986.50px;top:33.80px;" width="7" height="7" viewBox="0 0 7 7"><path d="M0.6 3h2M4.4 3h2v3.6h-5.8v-3.6M2 2.6L4 0.7l2 1.9M4 0.8v3.6" fill="none" stroke="#fff" stroke-width="0.8"/></svg><div class="a t  w" style="left:995.50px;top:32.60px;line-height:10px;font-size:6.5px;color:#fff;font-weight:bold;">Share</div><div class="a" style="left:4.00px;top:44.80px;width:1016.20px;height:53.80px;background:#484848;border:0.8px solid #6a6a6a;border-radius:4px;"></div><div class="a" style="left:37.10px;top:49.00px;width:0.80px;height:47.00px;background:#5e5e5e;"></div><div class="a" style="left:127.10px;top:49.00px;width:0.80px;height:47.00px;background:#5e5e5e;"></div><div class="a" style="left:252.60px;top:49.00px;width:0.80px;height:47.00px;background:#5e5e5e;"></div><div class="a" style="left:409.20px;top:49.00px;width:0.80px;height:47.00px;background:#5e5e5e;"></div><div class="a" style="left:497.00px;top:49.00px;width:0.80px;height:47.00px;background:#5e5e5e;"></div><div class="a" style="left:757.40px;top:49.00px;width:0.80px;height:47.00px;background:#5e5e5e;"></div><div class="a" style="left:836.60px;top:49.00px;width:0.80px;height:47.00px;background:#5e5e5e;"></div><div class="a" style="left:947.60px;top:49.00px;width:0.80px;height:47.00px;background:#5e5e5e;"></div><div class="a" style="left:981.10px;top:49.00px;width:0.80px;height:47.00px;background:#5e5e5e;"></div><div class="a t  w" style="left:21.00px;top:88.20px;line-height:10px;font-size:6.2px;color:#e4e4e4;transform:translateX(-50%);">Undo</div><div class="a t  w" style="left:77.20px;top:88.20px;line-height:10px;font-size:6.2px;color:#e4e4e4;transform:translateX(-50%);">Clipboard</div><div class="a t  w" style="left:185.70px;top:88.20px;line-height:10px;font-size:6.2px;color:#e4e4e4;transform:translateX(-50%);">Font</div><div class="a t  w" style="left:327.00px;top:88.20px;line-height:10px;font-size:6.2px;color:#e4e4e4;transform:translateX(-50%);">Alignment</div><div class="a t  w" style="left:448.80px;top:88.20px;line-height:10px;font-size:6.2px;color:#e4e4e4;transform:translateX(-50%);">Number</div><div class="a t  w" style="left:627.50px;top:88.20px;line-height:10px;font-size:6.2px;color:#e4e4e4;transform:translateX(-50%);">Styles</div><div class="a t  w" style="left:798.00px;top:88.20px;line-height:10px;font-size:6.2px;color:#e4e4e4;transform:translateX(-50%);">Cells</div><div class="a t  w" style="left:892.00px;top:88.20px;line-height:10px;font-size:6.2px;color:#e4e4e4;transform:translateX(-50%);">Editing</div><div class="a t  w" style="left:964.40px;top:88.20px;line-height:10px;font-size:6.2px;color:#e4e4e4;transform:translateX(-50%);">Analysis</div><svg class="a" style="left:121.00px;top:91.00px;" width="4.5" height="4.5" viewBox="0 0 4.5 4.5"><path d="M0.4 3.6v-3.2h3.2M1.6 1.8l2.2 2.2M4 2.4v1.7h-1.7" fill="none" stroke="#cfcfcf" stroke-width="0.6"/></svg><svg class="a" style="left:246.50px;top:91.00px;" width="4.5" height="4.5" viewBox="0 0 4.5 4.5"><path d="M0.4 3.6v-3.2h3.2M1.6 1.8l2.2 2.2M4 2.4v1.7h-1.7" fill="none" stroke="#cfcfcf" stroke-width="0.6"/></svg><svg class="a" style="left:403.50px;top:91.00px;" width="4.5" height="4.5" viewBox="0 0 4.5 4.5"><path d="M0.4 3.6v-3.2h3.2M1.6 1.8l2.2 2.2M4 2.4v1.7h-1.7" fill="none" stroke="#cfcfcf" stroke-width="0.6"/></svg><svg class="a" style="left:490.00px;top:91.00px;" width="4.5" height="4.5" viewBox="0 0 4.5 4.5"><path d="M0.4 3.6v-3.2h3.2M1.6 1.8l2.2 2.2M4 2.4v1.7h-1.7" fill="none" stroke="#cfcfcf" stroke-width="0.6"/></svg><svg class="a" style="left:12.50px;top:49.50px;" width="9" height="9" viewBox="0 0 9 9"><path d="M1.2 1v3.4h3.4M1.4 4.2c1.6-2.6 5.6-2.4 6.2 0.6c0.4 2-1.6 3-3.6 4" fill="none" stroke="#d6d6d6" stroke-width="0.9"/></svg><svg class="a" style="left:25.20px;top:53.30px;" width="3.2" height="2" viewBox="0 0 3.2 2"><path d="M0 0h3.2L1.6 1.9z" fill="#d8d8d8"/></svg><svg class="a" style="left:12.50px;top:63.00px;" width="9" height="9" viewBox="0 0 9 9"><path d="M7.8 1v3.4h-3.4M7.6 4.2c-1.6-2.6-5.6-2.4-6.2 0.6c-0.4 2 1.6 3 3.6 4" fill="none" stroke="#d6d6d6" stroke-width="0.9"/></svg><svg class="a" style="left:25.20px;top:67.10px;" width="3.2" height="2" viewBox="0 0 3.2 2"><path d="M0 0h3.2L1.6 1.9z" fill="#d8d8d8"/></svg><svg class="a" style="left:45.00px;top:50.30px;" width="16" height="17" viewBox="0 0 16 17"><rect x="1" y="2.2" width="9.6" height="12.6" rx="1" fill="none" stroke="#e3b341" stroke-width="1.2"/><rect x="3.6" y="0.8" width="4.4" height="2.6" rx="0.6" fill="#484848" stroke="#cfcfcf" stroke-width="0.8"/><rect x="7.2" y="6" width="8" height="10" rx="0.8" fill="#4a4a4a" stroke="#d8d8d8" stroke-width="0.9"/></svg><div class="a t  w" style="left:52.00px;top:67.60px;line-height:10px;font-size:6.4px;color:#f2f2f2;transform:translateX(-50%);">Paste</div><svg class="a" style="left:50.40px;top:79.60px;" width="3.2" height="2" viewBox="0 0 3.2 2"><path d="M0.2 0.3L1.6 1.7L3 0.3" fill="none" stroke="#e0e0e0" stroke-width="0.95"/></svg><svg class="a" style="left:67.50px;top:49.50px;" width="7" height="9" viewBox="0 0 7 9"><path d="M1.6 0.4L5 6.6M5.4 0.4L2 6.6" stroke="#7fb5e6" stroke-width="0.8" fill="none"/><circle cx="1.7" cy="7.4" r="1.1" fill="none" stroke="#d8d8d8" stroke-width="0.7"/><circle cx="5.3" cy="7.4" r="1.1" fill="none" stroke="#d8d8d8" stroke-width="0.7"/></svg><div class="a t  w" style="left:76.70px;top:49.30px;line-height:10px;font-size:6.4px;color:#f2f2f2;">Cut</div><svg class="a" style="left:66.50px;top:63.50px;" width="9" height="9" viewBox="0 0 9 9"><path d="M0.6 0.6h4.2v1.6M0.6 0.6v6h1.8" fill="none" stroke="#d8d8d8" stroke-width="0.8"/><path d="M2.8 2.4h3.4l1.8 1.8v4.2h-5.2z" fill="none" stroke="#d8d8d8" stroke-width="0.8"/></svg><div class="a t  w" style="left:76.70px;top:63.40px;line-height:10px;font-size:6.4px;color:#f2f2f2;">Copy</div><svg class="a" style="left:98.40px;top:67.70px;" width="3.2" height="2" viewBox="0 0 3.2 2"><path d="M0 0h3.2L1.6 1.9z" fill="#d8d8d8"/></svg><svg class="a" style="left:66.50px;top:77.00px;" width="9" height="9" viewBox="0 0 9 9"><path d="M4.6 1.2l3 3-1.6 1.6-3-3z" fill="#e6c15a"/><path d="M3 2.8L0.8 7.8l4.8-2.2" fill="#e8e8e8"/><path d="M6.4 0.4l1.8 1.8" stroke="#d8d8d8" stroke-width="1"/></svg><div class="a t  w" style="left:76.70px;top:77.40px;line-height:10px;font-size:6.4px;color:#f2f2f2;">Format Painter</div><div class="a" style="left:131.00px;top:52.00px;width:66.40px;height:12.40px;background:#484848;border:0.8px solid #666666;border-radius:2px;"></div><div class="a t  w" style="left:134.00px;top:53.30px;line-height:10px;font-size:6.4px;color:#f2f2f2;">Calibri</div><svg class="a" style="left:191.80px;top:57.70px;" width="3.2" height="2" viewBox="0 0 3.2 2"><path d="M0 0h3.2L1.6 1.9z" fill="#d8d8d8"/></svg><div class="a" style="left:198.80px;top:52.00px;width:22.40px;height:12.40px;background:#484848;border:0.8px solid #666666;border-radius:2px;"></div><div class="a t  w" style="left:201.40px;top:53.30px;line-height:10px;font-size:6.4px;color:#f2f2f2;">11</div><svg class="a" style="left:216.00px;top:57.70px;" width="3.2" height="2" viewBox="0 0 3.2 2"><path d="M0 0h3.2L1.6 1.9z" fill="#d8d8d8"/></svg><div class="a t " style="left:228.00px;top:52.40px;line-height:10px;font-size:10px;color:#f2f2f2;transform:translateX(-50%);-webkit-text-stroke:0;">A</div><div class="a t  w" style="left:233.60px;top:49.20px;line-height:10px;font-size:4px;color:#f2f2f2;transform:translateX(-50%);">^</div><div class="a t " style="left:241.60px;top:53.20px;line-height:10px;font-size:8.2px;color:#f2f2f2;transform:translateX(-50%);-webkit-text-stroke:0;">A</div><div class="a t  w" style="left:246.00px;top:50.40px;line-height:10px;font-size:4px;color:#f2f2f2;transform:translateX(-50%);">ˇ</div><div class="a t  w" style="left:138.00px;top:70.20px;line-height:10px;font-size:6.6px;color:#f2f2f2;transform:translateX(-50%);font-weight:bold;">B</div><div class="a t  w" style="left:151.40px;top:70.20px;line-height:10px;font-size:6.8px;color:#dcdcdc;transform:translateX(-50%);font-style:italic;">I</div><div class="a t  w" style="left:165.00px;top:70.00px;line-height:10px;font-size:6.6px;color:#f2f2f2;transform:translateX(-50%);text-decoration:underline;">U</div><svg class="a" style="left:173.40px;top:74.70px;" width="3.2" height="2" viewBox="0 0 3.2 2"><path d="M0 0h3.2L1.6 1.9z" fill="#d8d8d8"/></svg><div class="a" style="left:178.80px;top:70.00px;width:0.80px;height:10.60px;background:#5e5e5e;"></div><svg class="a" style="left:184.00px;top:71.00px;" width="8.6" height="8.6" viewBox="0 0 8.6 8.6"><rect x="0.6" y="0.6" width="7.4" height="7.4" fill="none" stroke="#a8a8a8" stroke-width="0.6" stroke-dasharray="0.8 0.8"/><path d="M0.4 8h7.8" stroke="#e8e8e8" stroke-width="1"/><path d="M4.3 0.6v7.4M0.6 4.3h7.4" stroke="#8e8e8e" stroke-width="0.5" stroke-dasharray="0.8 0.8"/></svg><svg class="a" style="left:197.40px;top:74.70px;" width="3.2" height="2" viewBox="0 0 3.2 2"><path d="M0 0h3.2L1.6 1.9z" fill="#d8d8d8"/></svg><div class="a" style="left:204.60px;top:70.00px;width:0.80px;height:10.60px;background:#5e5e5e;"></div><svg class="a" style="left:208.50px;top:70.40px;" width="9" height="9.6" viewBox="0 0 9 9.6"><path d="M3.4 1l3.6 3.4-2.9 2.6L1 4.2z" fill="none" stroke="#e0e0e0" stroke-width="0.8"/><path d="M7.6 4.6c0.8 1 0.8 1.8 0 2" stroke="#e0e0e0" stroke-width="0.7" fill="none"/><rect x="0.2" y="7.6" width="8.4" height="1.8" fill="#f4f4f4"/></svg><svg class="a" style="left:220.40px;top:74.70px;" width="3.2" height="2" viewBox="0 0 3.2 2"><path d="M0 0h3.2L1.6 1.9z" fill="#d8d8d8"/></svg><div class="a t  w" style="left:234.20px;top:68.80px;line-height:10px;font-size:7.2px;color:#f2f2f2;transform:translateX(-50%);">A</div><div class="a" style="left:230.00px;top:78.00px;width:8.40px;height:1.80px;background:#e81123;"></div><svg class="a" style="left:242.60px;top:74.70px;" width="3.2" height="2" viewBox="0 0 3.2 2"><path d="M0 0h3.2L1.6 1.9z" fill="#d8d8d8"/></svg><svg class="a" style="left:260.20px;top:54.60px;" width="7.6" height="8" viewBox="0 0 7.6 8"><rect x="0.00" y="0.00" width="7.6" height="0.75" fill="#b8b8b8"/><rect x="1.10" y="1.70" width="5.4" height="0.75" fill="#b8b8b8"/><rect x="0.00" y="3.40" width="7.6" height="0.75" fill="#b8b8b8"/></svg><svg class="a" style="left:274.20px;top:55.60px;" width="7.6" height="8" viewBox="0 0 7.6 8"><rect x="0.00" y="0.00" width="7.6" height="0.75" fill="#b8b8b8"/><rect x="1.10" y="1.70" width="5.4" height="0.75" fill="#b8b8b8"/><rect x="0.00" y="3.40" width="7.6" height="0.75" fill="#b8b8b8"/></svg><div class="a" style="left:285.60px;top:51.60px;width:12.40px;height:13.00px;background:#555555;border:0.8px solid #808080;border-radius:1.5px;"></div><svg class="a" style="left:288.00px;top:57.00px;" width="7.6" height="8" viewBox="0 0 7.6 8"><rect x="1.10" y="0.00" width="5.4" height="0.75" fill="#b8b8b8"/><rect x="0.00" y="1.70" width="7.6" height="0.75" fill="#b8b8b8"/><rect x="0.00" y="3.40" width="7.6" height="0.75" fill="#b8b8b8"/></svg><svg class="a" style="left:302.00px;top:53.00px;" width="9" height="9" viewBox="0 0 9 9"><text x="0" y="5" font-size="4.6" fill="#d8d8d8" font-style="italic" font-family="Liberation Sans, sans-serif" transform="rotate(-40 3 5)">ab</text><path d="M3 8.2L8 3.4M8 3.4v2M8 3.4h-2" stroke="#7fb5e6" stroke-width="0.7" fill="none"/></svg><svg class="a" style="left:314.40px;top:57.50px;" width="3.2" height="2" viewBox="0 0 3.2 2"><path d="M0 0h3.2L1.6 1.9z" fill="#d8d8d8"/></svg><svg class="a" style="left:259.80px;top:72.40px;" width="7.6" height="8" viewBox="0 0 7.6 8"><rect x="0.00" y="0.00" width="7.6" height="0.75" fill="#b8b8b8"/><rect x="0.00" y="1.70" width="5" height="0.75" fill="#b8b8b8"/><rect x="0.00" y="3.40" width="7.6" height="0.75" fill="#b8b8b8"/><rect x="0.00" y="5.10" width="5" height="0.75" fill="#b8b8b8"/></svg><svg class="a" style="left:273.80px;top:72.40px;" width="7.6" height="8" viewBox="0 0 7.6 8"><rect x="0.00" y="0.00" width="7.6" height="0.75" fill="#b8b8b8"/><rect x="1.30" y="1.70" width="5" height="0.75" fill="#b8b8b8"/><rect x="0.00" y="3.40" width="7.6" height="0.75" fill="#b8b8b8"/><rect x="1.30" y="5.10" width="5" height="0.75" fill="#b8b8b8"/></svg><svg class="a" style="left:287.80px;top:72.40px;" width="7.6" height="8" viewBox="0 0 7.6 8"><rect x="0.00" y="0.00" width="7.6" height="0.75" fill="#b8b8b8"/><rect x="2.60" y="1.70" width="5" height="0.75" fill="#b8b8b8"/><rect x="0.00" y="3.40" width="7.6" height="0.75" fill="#b8b8b8"/><rect x="2.60" y="5.10" width="5" height="0.75" fill="#b8b8b8"/></svg><div class="a" style="left:299.40px;top:70.00px;width:0.80px;height:10.60px;background:#5e5e5e;"></div><svg class="a" style="left:303.40px;top:72.00px;" width="8" height="7.4" viewBox="0 0 8 7.4"><path d="M0 0.4h8M3.6 2.2h4.4M3.6 4h4.4M0 5.8h8" stroke="#d8d8d8" stroke-width="0.7"/><path d="M2.6 1.8L0.6 3.1l2 1.3z" fill="#7fb5e6"/></svg><svg class="a" style="left:316.80px;top:72.00px;" width="8" height="7.4" viewBox="0 0 8 7.4"><path d="M0 0.4h8M3.6 2.2h4.4M3.6 4h4.4M0 5.8h8" stroke="#d8d8d8" stroke-width="0.7"/><path d="M0.6 1.8l2 1.3-2 1.3z" fill="#7fb5e6"/></svg><div class="a" style="left:330.20px;top:50.00px;width:0.80px;height:36.00px;background:#5e5e5e;"></div><svg class="a" style="left:336.50px;top:53.40px;" width="8.6" height="9.4" viewBox="0 0 8.6 9.4"><text x="0.4" y="4" font-size="4.8" fill="#e0e0e0" font-family="Liberation Sans, sans-serif">ab</text><text x="0.4" y="8.8" font-size="4.8" fill="#e0e0e0" font-family="Liberation Sans, sans-serif">c</text><path d="M7.6 0.6v5.6h-3.4M5.4 5l-1.3 1.2 1.3 1.2" stroke="#7fb5e6" stroke-width="0.7" fill="none"/></svg><div class="a t  w" style="left:346.80px;top:54.00px;line-height:10px;font-size:6.4px;color:#f2f2f2;">Wrap Text</div><svg class="a" style="left:335.80px;top:70.80px;" width="9.4" height="8.8" viewBox="0 0 9.4 8.8"><rect x="0.5" y="0.5" width="8.4" height="7.8" fill="#2f5f8f" stroke="#6fa5d6" stroke-width="0.9"/><path d="M1.6 4.4h6.2M3 3.2L1.7 4.4 3 5.6M6.4 3.2l1.3 1.2-1.3 1.2" stroke="#e0e0e0" stroke-width="0.7" fill="none"/></svg><div class="a t  w" style="left:347.00px;top:70.90px;line-height:10px;font-size:6.4px;color:#f2f2f2;">Merge &amp; Center</div><svg class="a" style="left:399.00px;top:75.10px;" width="3.2" height="2" viewBox="0 0 3.2 2"><path d="M0 0h3.2L1.6 1.9z" fill="#d8d8d8"/></svg><div class="a" style="left:414.60px;top:52.00px;width:77.60px;height:12.40px;background:#484848;border:0.8px solid #666666;border-radius:2px;"></div><div class="a t  w" style="left:416.60px;top:53.30px;line-height:10px;font-size:6.4px;color:#f2f2f2;">Number</div><svg class="a" style="left:486.80px;top:57.70px;" width="3.2" height="2" viewBox="0 0 3.2 2"><path d="M0 0h3.2L1.6 1.9z" fill="#d8d8d8"/></svg><div class="a t " style="left:420.60px;top:70.20px;line-height:10px;font-size:9.6px;color:#f2f2f2;transform:translateX(-50%);-webkit-text-stroke:0;">$</div><svg class="a" style="left:428.80px;top:74.70px;" width="3.2" height="2" viewBox="0 0 3.2 2"><path d="M0 0h3.2L1.6 1.9z" fill="#d8d8d8"/></svg><div class="a t " style="left:442.80px;top:70.20px;line-height:10px;font-size:9.4px;color:#f2f2f2;transform:translateX(-50%);-webkit-text-stroke:0;">%</div><svg class="a" style="left:454.20px;top:71.60px;" width="5" height="7" viewBox="0 0 5 7"><path d="M2.4 0.4a1.9 1.9 0 0 1 1.9 1.9c0 2-1.4 3.6-3.4 4.2l-0.3-0.7c1-0.5 1.7-1.2 1.8-1.9a1.8 1.8 0 0 1 0-3.5z" fill="#f0f0f0"/></svg><div class="a" style="left:464.40px;top:70.00px;width:0.80px;height:10.60px;background:#5e5e5e;"></div><svg class="a" style="left:468.00px;top:70.60px;" width="8" height="9" viewBox="0 0 8 9"><path d="M0 2.4h2.4M1 1.2L0 2.4l1 1.2" stroke="#7fb5e6" stroke-width="0.6" fill="none"/><text x="3" y="4" font-size="3.6" fill="#d0d0d0" font-family="Liberation Sans, sans-serif">.0</text><text x="1" y="8.4" font-size="3.6" fill="#d0d0d0" font-family="Liberation Sans, sans-serif">.00</text></svg><svg class="a" style="left:482.00px;top:70.60px;" width="8" height="9" viewBox="0 0 8 9"><text x="1" y="4" font-size="3.6" fill="#d0d0d0" font-family="Liberation Sans, sans-serif">.00</text><path d="M0 6.8h2.4M1.4 5.6l1 1.2-1 1.2" stroke="#7fb5e6" stroke-width="0.6" fill="none"/><text x="3.4" y="8.4" font-size="3.6" fill="#d0d0d0" font-family="Liberation Sans, sans-serif">.0</text></svg><svg class="a" style="left:513.00px;top:51.00px;" width="15" height="13.4" viewBox="0 0 15 13.4"><rect x="1.4" y="0.6" width="9" height="3.2" fill="#e02b2b"/><rect x="1.4" y="3.8" width="4.6" height="3" fill="#2f74c0"/><rect x="6" y="3.8" width="4.4" height="3" fill="#e02b2b"/><rect x="1.4" y="6.8" width="4.6" height="3" fill="#e02b2b"/><rect x="6" y="6.8" width="4.4" height="3" fill="#2f74c0"/><rect x="1.4" y="9.8" width="9" height="3" fill="#e02b2b"/><path d="M0.5 0.5h14v12.4h-14zM5.2 0.5v12.4M9.8 0.5v12.4M0.5 3.7h14M0.5 6.8h14M0.5 9.8h14" stroke="#b0b0b0" stroke-width="0.6" fill="none"/></svg><div class="a t  w" style="left:520.60px;top:67.90px;line-height:10px;font-size:6.4px;color:#f2f2f2;transform:translateX(-50%);">Conditional</div><div class="a t  w" style="left:518.60px;top:75.50px;line-height:10px;font-size:6.4px;color:#f2f2f2;transform:translateX(-50%);">Formatting</div><svg class="a" style="left:535.00px;top:79.80px;" width="3.2" height="2" viewBox="0 0 3.2 2"><path d="M0.2 0.3L1.6 1.7L3 0.3" fill="none" stroke="#e0e0e0" stroke-width="0.95"/></svg><svg class="a" style="left:549.00px;top:50.60px;" width="16.4" height="14" viewBox="0 0 16.4 14"><rect x="4.8" y="3.6" width="4.4" height="8" fill="#2f74c0"/><path d="M0.5 0.8h13v11h-13zM4.8 0.8v11M9.2 0.8v11M0.5 3.6h13M0.5 6.4h13M0.5 9.2h13" stroke="#b0b0b0" stroke-width="0.6" fill="none"/><path d="M13.6 3l2 2-6.4 6.6-2.6 0.8 0.8-2.8z" fill="#484848" stroke="#7fb5e6" stroke-width="0.9"/></svg><div class="a t  w" style="left:556.40px;top:67.90px;line-height:10px;font-size:6.4px;color:#f2f2f2;transform:translateX(-50%);">Format as</div><div class="a t  w" style="left:554.40px;top:75.50px;line-height:10px;font-size:6.4px;color:#f2f2f2;transform:translateX(-50%);">Table</div><svg class="a" style="left:563.40px;top:79.80px;" width="3.2" height="2" viewBox="0 0 3.2 2"><path d="M0.2 0.3L1.6 1.7L3 0.3" fill="none" stroke="#e0e0e0" stroke-width="0.95"/></svg><div class="a" style="left:573.80px;top:51.80px;width:171.40px;height:32.60px;background:#d6d6d6;"></div><div class="a" style="left:575.00px;top:53.60px;width:55.60px;height:13.40px;background:#fff;border:1.1px solid #5a5a5a;"></div><div class="a t " style="left:578.80px;top:56.20px;line-height:10px;font-size:7.3px;color:#1a1a1a;">Normal</div><div class="a" style="left:632.00px;top:53.60px;width:55.20px;height:13.40px;background:#ffc7ce;"></div><div class="a t " style="left:635.20px;top:56.20px;line-height:10px;font-size:7.3px;color:#9c0006;">Bad</div><div class="a" style="left:688.00px;top:53.60px;width:55.60px;height:13.40px;background:#c6efce;"></div><div class="a t " style="left:691.60px;top:56.20px;line-height:10px;font-size:7.3px;color:#006100;">Good</div><div class="a" style="left:575.00px;top:69.00px;width:55.60px;height:12.80px;background:#ffeb9c;"></div><div class="a t " style="left:578.80px;top:71.00px;line-height:10px;font-size:7.3px;color:#9c5700;">Neutral</div><div class="a" style="left:633.60px;top:69.40px;width:52.80px;height:12.00px;background:#f2f2f2;border:0.8px solid #7f7f7f;"></div><div class="a t  w" style="left:635.40px;top:71.00px;line-height:10px;font-size:6.85px;color:#fa7d00;font-weight:bold;">Calculation</div><div class="a" style="left:689.80px;top:69.40px;width:52.80px;height:12.00px;background:#a5a5a5;border:1.6px double #3f3f3f;"></div><div class="a t  w" style="left:692.00px;top:71.00px;line-height:10px;font-size:6.5px;color:#fff;font-weight:bold;">Check Cell</div><div class="a" style="left:745.20px;top:51.80px;width:7.20px;height:32.60px;background:#484848;border:0.6px solid #666;"></div><div class="a" style="left:745.20px;top:62.60px;width:7.20px;height:0.60px;background:#666;"></div><div class="a" style="left:745.20px;top:73.60px;width:7.20px;height:0.60px;background:#666;"></div><svg class="a" style="left:747.20px;top:67.70px;" width="3.2" height="2" viewBox="0 0 3.2 2"><path d="M0 0h3.2L1.6 1.9z" fill="#d8d8d8"/></svg><svg class="a" style="left:747.20px;top:79.10px;" width="3.2" height="2" viewBox="0 0 3.2 2"><path d="M0 0h3.2L1.6 1.9z" fill="#d8d8d8"/></svg><div class="a" style="left:747.20px;top:77.00px;width:3.20px;height:0.60px;background:#d8d8d8;"></div><svg class="a" style="left:766.60px;top:50.60px;" width="16" height="12.6" viewBox="0 0 16 12.6"><rect x="0.4" y="1.6" width="15.2" height="10.4" fill="none" stroke="#d0d0d0" stroke-width="0.7"/><path d="M5.4 1.6v10.4M10.6 1.6v10.4M0.4 5h15.2M0.4 8.6h15.2" stroke="#d0d0d0" stroke-width="0.6"/><rect x="2.6" y="4.8" width="13" height="3.8" fill="#2b88d8"/><path d="M0.2 6.7h3M1.4 5.4L0 6.7l1.4 1.3" stroke="#2b88d8" stroke-width="0.8" fill="none"/></svg><div class="a t  w" style="left:774.60px;top:67.60px;line-height:10px;font-size:6.4px;color:#f2f2f2;transform:translateX(-50%);">Insert</div><svg class="a" style="left:773.00px;top:79.80px;" width="3.2" height="2" viewBox="0 0 3.2 2"><path d="M0.2 0.3L1.6 1.7L3 0.3" fill="none" stroke="#e0e0e0" stroke-width="0.95"/></svg><svg class="a" style="left:789.80px;top:50.60px;" width="16" height="12.6" viewBox="0 0 16 12.6"><rect x="0.4" y="1.6" width="15.2" height="10.4" fill="none" stroke="#d0d0d0" stroke-width="0.7"/><path d="M5.4 1.6v10.4M10.6 1.6v10.4M0.4 5h15.2M0.4 8.6h15.2" stroke="#d0d0d0" stroke-width="0.6"/><rect x="3" y="4.8" width="8" height="3.8" fill="#2b88d8"/><path d="M11 4.2l4.6 5M15.6 4.2l-4.6 5" stroke="#e04a4a" stroke-width="1"/></svg><div class="a t  w" style="left:797.40px;top:67.60px;line-height:10px;font-size:6.4px;color:#f2f2f2;transform:translateX(-50%);">Delete</div><svg class="a" style="left:795.80px;top:79.80px;" width="3.2" height="2" viewBox="0 0 3.2 2"><path d="M0.2 0.3L1.6 1.7L3 0.3" fill="none" stroke="#e0e0e0" stroke-width="0.95"/></svg><svg class="a" style="left:813.20px;top:50.60px;" width="16" height="12.6" viewBox="0 0 16 12.6"><rect x="0.4" y="1.6" width="15.2" height="10.4" fill="none" stroke="#d0d0d0" stroke-width="0.7"/><path d="M5.4 1.6v10.4M10.6 1.6v10.4M0.4 5h15.2M0.4 8.6h15.2" stroke="#d0d0d0" stroke-width="0.6"/><rect x="5.4" y="3.4" width="5.2" height="8.6" fill="#2b88d8"/><rect x="4.4" y="0" width="7.2" height="1.2" fill="#2b88d8"/></svg><div class="a t  w" style="left:821.00px;top:67.60px;line-height:10px;font-size:6.4px;color:#f2f2f2;transform:translateX(-50%);">Format</div><svg class="a" style="left:819.40px;top:79.80px;" width="3.2" height="2" viewBox="0 0 3.2 2"><path d="M0.2 0.3L1.6 1.7L3 0.3" fill="none" stroke="#e0e0e0" stroke-width="0.95"/></svg><div class="a t " style="left:847.80px;top:49.20px;line-height:10px;font-size:9.6px;color:#f2f2f2;transform:translateX(-50%);-webkit-text-stroke:0;">Σ</div><div class="a t  w" style="left:854.40px;top:48.90px;line-height:10px;font-size:6.4px;color:#f2f2f2;">AutoSum</div><svg class="a" style="left:887.40px;top:53.30px;" width="3.2" height="2" viewBox="0 0 3.2 2"><path d="M0 0h3.2L1.6 1.9z" fill="#d8d8d8"/></svg><svg class="a" style="left:843.60px;top:63.80px;" width="8.6" height="8" viewBox="0 0 8.6 8"><rect x="0.4" y="0.4" width="7.6" height="7" fill="none" stroke="#d0d0d0" stroke-width="0.7"/><path d="M0.4 2.6h7.6M3 0.4v7" stroke="#d0d0d0" stroke-width="0.6"/><path d="M5.4 3.4v3M4.2 5.4l1.2 1.2 1.2-1.2" stroke="#7fb5e6" stroke-width="0.7" fill="none"/></svg><div class="a t  w" style="left:854.40px;top:62.80px;line-height:10px;font-size:6.4px;color:#f2f2f2;">Fill</div><svg class="a" style="left:864.00px;top:67.20px;" width="3.2" height="2" viewBox="0 0 3.2 2"><path d="M0.2 0.3L1.6 1.7L3 0.3" fill="none" stroke="#e0e0e0" stroke-width="0.95"/></svg><svg class="a" style="left:843.60px;top:77.40px;" width="9" height="9" viewBox="0 0 9 9"><path d="M5 0.8l3.4 3.4-4 4h-2.4l-1.4-1.4z" fill="none" stroke="#d58ad6" stroke-width="0.9"/><path d="M2.6 3.4l3.2 3.2" stroke="#d58ad6" stroke-width="0.8"/></svg><div class="a t  w" style="left:854.40px;top:76.80px;line-height:10px;font-size:6.4px;color:#f2f2f2;">Clear</div><svg class="a" style="left:870.40px;top:81.20px;" width="3.2" height="2" viewBox="0 0 3.2 2"><path d="M0.2 0.3L1.6 1.7L3 0.3" fill="none" stroke="#e0e0e0" stroke-width="0.95"/></svg><svg class="a" style="left:897.60px;top:49.80px;" width="17" height="15" viewBox="0 0 17 15"><text x="0" y="6.6" font-size="8" fill="#6fb1ea" font-family="Liberation Sans, sans-serif">A</text><text x="0.4" y="14.2" font-size="8" fill="#d8d8d8" font-family="Liberation Sans, sans-serif">Z</text><path d="M6.6 4.4h9.6l-3.8 4.2v4.8l-2-1.2v-3.6z" fill="none" stroke="#e6cfd6" stroke-width="0.9"/></svg><div class="a t  w" style="left:906.40px;top:67.00px;line-height:10px;font-size:6.4px;color:#f2f2f2;transform:translateX(-50%);">Sort &amp;</div><div class="a t  w" style="left:904.80px;top:75.50px;line-height:10px;font-size:6.4px;color:#f2f2f2;transform:translateX(-50%);">Filter</div><svg class="a" style="left:912.80px;top:79.80px;" width="3.2" height="2" viewBox="0 0 3.2 2"><path d="M0.2 0.3L1.6 1.7L3 0.3" fill="none" stroke="#e0e0e0" stroke-width="0.95"/></svg><svg class="a" style="left:922.60px;top:49.80px;" width="17" height="15" viewBox="0 0 17 15"><circle cx="10.6" cy="5.6" r="4.8" fill="none" stroke="#e0e0e0" stroke-width="0.9"/><path d="M7 9.2L1 14.6" stroke="#e0e0e0" stroke-width="1.1"/></svg><div class="a t  w" style="left:931.00px;top:67.00px;line-height:10px;font-size:6.4px;color:#f2f2f2;transform:translateX(-50%);">Find &amp;</div><div class="a t  w" style="left:929.40px;top:75.50px;line-height:10px;font-size:6.4px;color:#f2f2f2;transform:translateX(-50%);">Select</div><svg class="a" style="left:938.80px;top:79.80px;" width="3.2" height="2" viewBox="0 0 3.2 2"><path d="M0.2 0.3L1.6 1.7L3 0.3" fill="none" stroke="#e0e0e0" stroke-width="0.95"/></svg><svg class="a" style="left:955.60px;top:48.40px;" width="18" height="17" viewBox="0 0 18 17"><rect x="0.6" y="0.6" width="16.4" height="15" fill="none" stroke="#d8d8d8" stroke-width="0.8"/><path d="M0.6 4h16.4M4.4 0.6v15" stroke="#9a9a9a" stroke-width="0.5"/><circle cx="9" cy="7.6" r="4.6" fill="#484848" stroke="#e8e8e8" stroke-width="0.9"/><rect x="7.4" y="5.6" width="1.2" height="4" fill="#e8e8e8"/><rect x="9.2" y="4.4" width="1.4" height="5.2" fill="#2b88d8"/><path d="M12.4 11l4 4.4" stroke="#e8e8e8" stroke-width="1.1"/></svg><div class="a t  w" style="left:964.40px;top:67.00px;line-height:10px;font-size:6.4px;color:#f2f2f2;transform:translateX(-50%);">Analyze</div><div class="a t  w" style="left:964.40px;top:75.50px;line-height:10px;font-size:6.4px;color:#f2f2f2;transform:translateX(-50%);">Data</div><svg class="a" style="left:1009.20px;top:89.80px;" width="6" height="4" viewBox="0 0 6 4"><path d="M0.5 0.5L3 3l2.5-2.5" fill="none" stroke="#f0f0f0" stroke-width="1.2"/></svg><div class="a" style="left:0.00px;top:100.00px;width:1024.00px;height:40.60px;background:#2e2e2e;"></div><div class="a" style="left:4.40px;top:103.00px;width:54.60px;height:14.00px;background:#4a4a4a;border:0.8px solid #6a6a6a;border-radius:2px;"></div><div class="a t  w" style="left:8.00px;top:105.70px;line-height:10px;font-size:6.4px;color:#f2f2f2;">2R x 2C</div><svg class="a" style="left:50.20px;top:108.60px;" width="5" height="3.4" viewBox="0 0 5 3.4"><path d="M0.4 0.4L2.5 2.6l2.1-2.2" fill="none" stroke="#d8d8d8" stroke-width="0.8"/></svg><div class="a" style="left:63.10px;top:105.60px;width:0.80px;height:1.00px;background:#6a6a6a;"></div><div class="a" style="left:63.10px;top:108.00px;width:0.80px;height:1.00px;background:#6a6a6a;"></div><div class="a" style="left:63.10px;top:110.40px;width:0.80px;height:1.00px;background:#6a6a6a;"></div><div class="a" style="left:63.10px;top:112.80px;width:0.80px;height:1.00px;background:#6a6a6a;"></div><div class="a" style="left:69.00px;top:103.00px;width:39.60px;height:14.00px;background:#4a4a4a;border:0.8px solid #6a6a6a;border-radius:2px;"></div><svg class="a" style="left:73.00px;top:107.20px;" width="6" height="6" viewBox="0 0 6 6"><path d="M0.6 0.6l4.8 4.8M5.4 0.6L0.6 5.4" stroke="#6a6a6a" stroke-width="0.7"/></svg><svg class="a" style="left:86.00px;top:107.00px;" width="7" height="6" viewBox="0 0 7 6"><path d="M0.4 3.6l1.8 1.8L6.4 0.4" stroke="#6a6a6a" stroke-width="0.7" fill="none"/></svg><div class="a t  w" style="left:97.60px;top:105.00px;line-height:10px;font-size:9px;color:#f2f2f2;font-family:'Liberation Serif',serif;"><i>f</i><span style="font-size:6.4px;font-style:italic;position:relative;top:0.8px;left:0.2px">x</span></div><div class="a" style="left:111.00px;top:103.00px;width:909.40px;height:34.80px;background:#4a4a4a;border:0.8px solid #6a6a6a;border-radius:2px;"></div><div class="a t  w" style="left:117.40px;top:105.20px;line-height:10px;font-size:6.4px;color:#f2f2f2;">Mean</div><svg class="a" style="left:1011.60px;top:106.60px;" width="6" height="4" viewBox="0 0 6 4"><path d="M0.6 3.2L3 0.8l2.4 2.4" fill="none" stroke="#d8d8d8" stroke-width="0.8"/></svg><div class="a" style="left:0.00px;top:531.60px;width:607.40px;height:14.80px;background:#676767;"></div><svg class="a" style="left:14.40px;top:536.40px;" width="4" height="5" viewBox="0 0 4 5"><path d="M3 0.6L0.8 2.5 3 4.4" fill="none" stroke="#8e8e8e" stroke-width="0.7"/></svg><svg class="a" style="left:29.20px;top:536.40px;" width="4" height="5" viewBox="0 0 4 5"><path d="M1 0.6L3.2 2.5 1 4.4" fill="none" stroke="#8e8e8e" stroke-width="0.7"/></svg><div class="a" style="left:88.60px;top:531.60px;width:38.60px;height:14.80px;background:#fff;border-bottom:1.2px solid #217346;"></div><div class="a t  w" style="left:70.40px;top:533.80px;line-height:10px;font-size:6.5px;color:#f0f0f0;transform:translateX(-50%);">Sheet7</div><div class="a t " style="left:107.90px;top:533.80px;line-height:10px;font-size:6.5px;color:#217346;transform:translateX(-50%);font-weight:bold;">Sheet10</div><div class="a t  w" style="left:154.20px;top:533.80px;line-height:10px;font-size:6.5px;color:#f0f0f0;transform:translateX(-50%);letter-spacing:0.25px;">Template (3)</div><div class="a t  w" style="left:198.40px;top:533.80px;line-height:10px;font-size:6.5px;color:#f0f0f0;transform:translateX(-50%);">Sheet6</div><div class="a t  w" style="left:243.20px;top:533.80px;line-height:10px;font-size:6.5px;color:#f0f0f0;transform:translateX(-50%);letter-spacing:0.25px;">Template (2)</div><div class="a t  w" style="left:292.80px;top:533.80px;line-height:10px;font-size:6.5px;color:#f0f0f0;transform:translateX(-50%);letter-spacing:0.25px;">Template</div><div class="a" style="left:53.50px;top:534.60px;width:0.70px;height:8.60px;background:#8c8c8c;"></div><div class="a" style="left:181.00px;top:534.60px;width:0.70px;height:8.60px;background:#8c8c8c;"></div><div class="a" style="left:216.40px;top:534.60px;width:0.70px;height:8.60px;background:#8c8c8c;"></div><div class="a" style="left:271.50px;top:534.60px;width:0.70px;height:8.60px;background:#8c8c8c;"></div><div class="a" style="left:314.40px;top:534.60px;width:0.70px;height:8.60px;background:#8c8c8c;"></div><svg class="a" style="left:331.60px;top:534.40px;" width="10" height="10" viewBox="0 0 10 10"><circle cx="5" cy="5" r="4" fill="none" stroke="#f4f4f4" stroke-width="1"/><path d="M5 2.8v4.4M2.8 5h4.4" stroke="#f4f4f4" stroke-width="1.1"/></svg><div class="a" style="left:607.40px;top:531.60px;width:14.80px;height:14.80px;background:#333333;"></div><div class="a" style="left:613.40px;top:536.60px;width:0.90px;height:0.90px;background:#e0e0e0;"></div><div class="a" style="left:613.40px;top:538.60px;width:0.90px;height:0.90px;background:#e0e0e0;"></div><div class="a" style="left:613.40px;top:540.60px;width:0.90px;height:0.90px;background:#e0e0e0;"></div><div class="a" style="left:622.20px;top:531.60px;width:390.20px;height:14.80px;background:#303030;border-bottom:2.9px solid #5a5a5a;border-top:3.2px solid #5a5a5a;"></div><div class="a" style="left:631.40px;top:536.80px;width:358.80px;height:5.20px;background:#cacaca;border-radius:2.6px;"></div><svg class="a" style="left:624.80px;top:537.00px;" width="4" height="5" viewBox="0 0 4 5"><path d="M3.6 0.4L0.6 2.5l3 2.1z" fill="#e0e0e0"/></svg><svg class="a" style="left:1006.80px;top:537.20px;" width="4" height="5" viewBox="0 0 4 5"><path d="M0.4 0.4L3.4 2.5l-3 2.1z" fill="#e0e0e0"/></svg><div class="a" style="left:1012.40px;top:531.60px;width:11.60px;height:14.80px;background:#5a5a5a;"></div><div class="a" style="left:0.00px;top:546.40px;width:1024.00px;height:11.60px;background:#333333;"></div><div class="a t  w" style="left:3.80px;top:547.60px;line-height:10px;font-size:5.95px;color:#f0f0f0;">Select destination and press ENTER or choose Paste</div><div class="a t  w" style="left:642.00px;top:547.60px;line-height:10px;font-size:5.9px;color:#f0f0f0;">Average: 41.56433244</div><div class="a t  w" style="left:710.40px;top:547.60px;line-height:10px;font-size:5.9px;color:#f0f0f0;">Count: 4</div><div class="a t  w" style="left:742.00px;top:547.60px;line-height:10px;font-size:5.9px;color:#f0f0f0;">Sum: 83.12866489</div><svg class="a" style="left:801.00px;top:548.80px;" width="8" height="7.4" viewBox="0 0 8 7.4"><rect x="0.5" y="0.5" width="6.4" height="4.4" rx="0.6" fill="none" stroke="#e8e8e8" stroke-width="0.8"/><circle cx="5.6" cy="5" r="2" fill="#2b2b2b" stroke="#e8e8e8" stroke-width="0.7"/></svg><div class="a t  w" style="left:810.60px;top:547.60px;line-height:10px;font-size:5.9px;color:#f0f0f0;">Display Settings</div><div class="a" style="left:865.60px;top:546.40px;width:17.40px;height:11.60px;background:#454545;"></div><svg class="a" style="left:870.40px;top:548.80px;" width="7.6" height="7.6" viewBox="0 0 7.6 7.6"><rect x="0.4" y="0.4" width="6.6" height="6.6" fill="none" stroke="#e8e8e8" stroke-width="0.7"/><path d="M2.6 0.4v6.6M4.8 0.4v6.6M0.4 2.6h6.6M0.4 4.8h6.6" stroke="#e8e8e8" stroke-width="0.6"/></svg><svg class="a" style="left:892.40px;top:548.80px;" width="7.6" height="7.6" viewBox="0 0 7.6 7.6"><rect x="0.4" y="0.4" width="6.6" height="6.6" fill="none" stroke="#e8e8e8" stroke-width="0.7"/><rect x="2" y="1.6" width="3.4" height="4.2" fill="none" stroke="#e8e8e8" stroke-width="0.6"/></svg><svg class="a" style="left:913.60px;top:548.80px;" width="7.6" height="7.6" viewBox="0 0 7.6 7.6"><rect x="0.4" y="0.4" width="6.6" height="6.6" fill="none" stroke="#e8e8e8" stroke-width="0.7"/><path d="M0.4 3.4h4.2v-3" stroke="#e8e8e8" stroke-width="0.6" fill="none"/></svg><div class="a" style="left:931.40px;top:552.30px;width:3.00px;height:0.70px;background:#d0d0d0;"></div><div class="a" style="left:938.40px;top:552.30px;width:53.00px;height:0.60px;background:#8a8a8a;"></div><div class="a" style="left:964.20px;top:549.40px;width:1.80px;height:6.40px;background:#c8c8c8;"></div><div class="a" style="left:993.60px;top:552.30px;width:3.40px;height:0.70px;background:#d0d0d0;"></div><div class="a" style="left:994.95px;top:550.90px;width:0.70px;height:3.40px;background:#d0d0d0;"></div><div class="a t  w" style="left:1002.80px;top:547.60px;line-height:10px;font-size:5.9px;color:#f0f0f0;">100%</div>
</div></body></html>
